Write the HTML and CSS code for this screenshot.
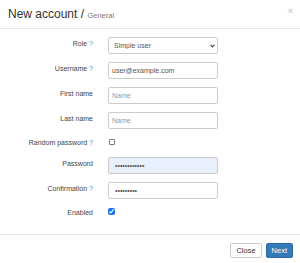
FILE: index.html
```html
<!DOCTYPE html>
<html lang="en">
<head>
    <meta charset="UTF-8">
    <title>New account</title>
    <link rel="stylesheet" href="styles.css">
</head>
<body>
    <div class="modal">
        <div class="modal-header">
            <h4 class="modal-title">New account / <small>General</small></h4>
            <span class="close">&times;</span>
        </div>

        <form class="modal-body">
            <div class="form-row">
                <label for="role">Role <span class="help">?</span></label>
                <div class="select-wrap">
                    <select id="role">
                        <option>Simple user</option>
                        <option>Administrator</option>
                    </select>
                    <svg class="chevron" width="5" height="4" viewBox="0 0 5 4">
                        <path d="M0.6 0.8 L2.5 2.8 L4.4 0.8" fill="none" stroke="#333" stroke-width="1.1"/>
                    </svg>
                </div>
            </div>

            <div class="form-row">
                <label for="username">Username <span class="help">?</span></label>
                <input type="text" id="username" value="user@example.com">
            </div>

            <div class="form-row">
                <label for="first-name">First name</label>
                <input type="text" id="first-name" placeholder="Name">
            </div>

            <div class="form-row">
                <label for="last-name">Last name</label>
                <input type="text" id="last-name" placeholder="Name">
            </div>

            <div class="form-row check-row">
                <label for="random">Random password <span class="help">?</span></label>
                <div class="check-wrap"><input type="checkbox" id="random" class="check-empty"></div>
            </div>

            <div class="form-row">
                <label for="password">Password</label>
                <input type="password" id="password" class="autofill" value="secretpasswo">
            </div>

            <div class="form-row">
                <label for="confirm">Confirmation <span class="help">?</span></label>
                <input type="password" id="confirm" value="secretpas">
            </div>

            <div class="form-row check-row">
                <label for="enabled">Enabled</label>
                <div class="check-wrap"><input type="checkbox" id="enabled" checked></div>
            </div>
        </form>

        <div class="modal-footer">
            <button type="button" class="btn">Close</button>
            <button type="button" class="btn btn-primary">Next</button>
        </div>
    </div>
</body>
</html>
```

FILE: styles.css
```css
body {
    margin: 0;
    background-color: #fff;
    font-family: 'Liberation Sans', Arial, sans-serif;
    color: #333;
}

.modal {
    width: 300px;
}

.modal-header {
    display: flex;
    justify-content: space-between;
    align-items: flex-start;
    height: 14px;
    padding: 7px 7px 7px 8px;
    border-bottom: 1px solid #e5e5e5;
}

.modal-title {
    margin: 0;
    font-size: 12px;
    font-weight: normal;
    line-height: 14px;
    color: #333;
}

.modal-title small {
    font-size: 7.5px;
    color: #777;
}

.close {
    font-size: 9px;
    line-height: 9px;
    font-weight: bold;
    color: #000;
    opacity: 0.2;
}

.modal-body {
    display: flex;
    flex-direction: column;
    gap: 8px;
    padding: 8px 0 15px;
    margin: 0;
}

.form-row {
    display: grid;
    grid-template-columns: 93px 110px;
    column-gap: 15px;
    align-items: start;
}

.form-row label {
    font-size: 7px;
    line-height: 13px;
    text-align: right;
    white-space: nowrap;
    color: #444;
}

.help {
    color: #4a8bc9;
}

.form-row input[type="text"],
.form-row input[type="password"],
.form-row select {
    display: block;
    box-sizing: border-box;
    width: 110px;
    height: 17px;
    margin: 0;
    padding: 0 3px;
    border: 1px solid #ccc;
    border-radius: 2px;
    background-color: #fff;
    font-family: inherit;
    font-size: 7px;
    color: #555;
    outline: none;
}

.form-row input::placeholder {
    color: #999;
}

.form-row input.autofill {
    background-color: #e8f0fe;
    padding-left: 6px;
}

#confirm {
    padding-left: 6px;
}

.select-wrap {
    position: relative;
    height: 17px;
}

.form-row select {
    appearance: none;
    -webkit-appearance: none;
    padding-left: 5px;
}

.chevron {
    position: absolute;
    right: 3px;
    top: 7px;
}

.check-row label {
    line-height: 12px;
}

.check-wrap {
    height: 12px;
}

.check-wrap input[type="checkbox"] {
    display: block;
    width: 7px;
    height: 7px;
    margin: 1px 0 0 0;
    accent-color: #1a73e8;
}

.check-wrap input.check-empty {
    appearance: none;
    -webkit-appearance: none;
    box-sizing: border-box;
    width: 6px;
    height: 6px;
    margin: 2px 0 0 1px;
    border: 1px solid #777;
    border-radius: 1px;
    background-color: #fff;
}

.modal-footer {
    display: flex;
    justify-content: flex-end;
    gap: 4px;
    padding: 8px 7px 5px;
    border-top: 1px solid #e5e5e5;
}

.btn {
    height: 15px;
    padding: 0 5px;
    border: 1px solid #ccc;
    border-radius: 2px;
    background-color: #fff;
    font-family: inherit;
    font-size: 7.5px;
    line-height: 13px;
    color: #333;
    cursor: pointer;
}

.btn-primary {
    background-color: #337ab7;
    border-color: #2e6da4;
    color: #fff;
}
```
